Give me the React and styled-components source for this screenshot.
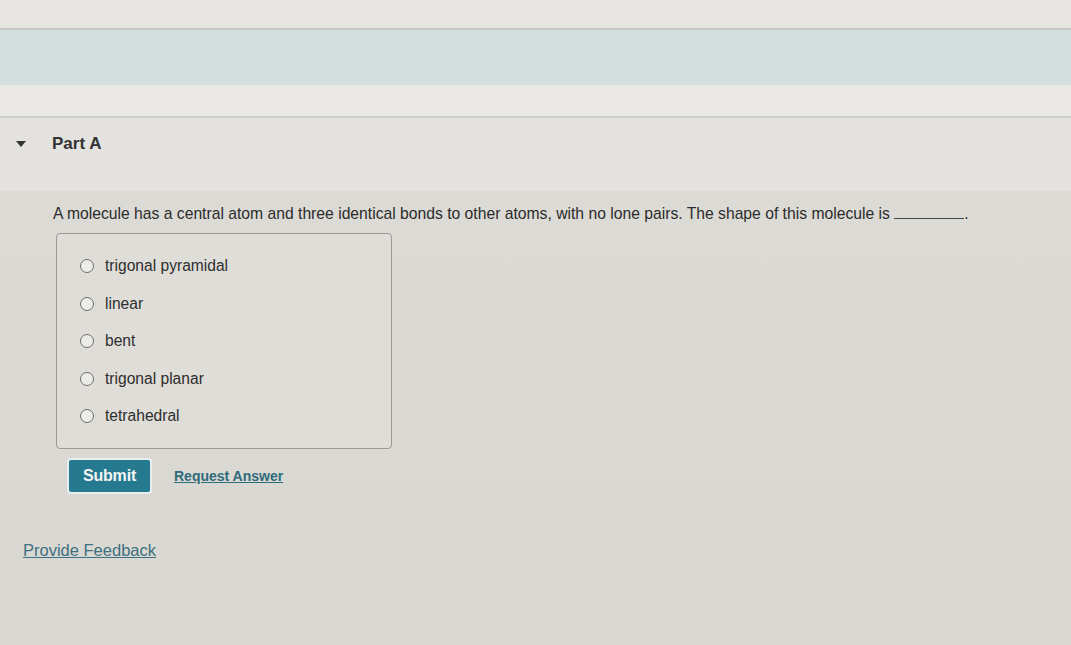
import React from "react";
import styled, { createGlobalStyle } from "styled-components";

const GlobalStyle = createGlobalStyle`
  html, body {
    margin: 0;
    padding: 0;
    background: #dcdad5;
    font-family: "Liberation Sans", Arial, sans-serif;
    color: #2b2b2b;
  }
`;

const options = [
  "trigonal pyramidal",
  "linear",
  "bent",
  "trigonal planar",
  "tetrahedral",
];

const App = () => {
  return (
    <Page>
      <GlobalStyle />
      <TopStrip />
      <Banner />
      <Spacer />
      <PartHeader>
        <Caret />
        <PartTitle>Part A</PartTitle>
      </PartHeader>
      <Content>
        <Question>
          A molecule has a central atom and three identical bonds to other
          atoms, with no lone pairs. The shape of this molecule is <Blank />.
        </Question>
        <OptionBox>
          {options.map((opt) => (
            <Option key={opt}>
              <Radio />
              <span>{opt}</span>
            </Option>
          ))}
        </OptionBox>
        <Actions>
          <SubmitButton>Submit</SubmitButton>
          <TextLink href="#">Request Answer</TextLink>
        </Actions>
      </Content>
      <Feedback href="#">Provide Feedback</Feedback>
    </Page>
  );
};

export default App;

const Page = styled.div`
  width: 1071px;
  height: 645px;
  overflow: hidden;
  background: linear-gradient(180deg, #dedcd7 0%, #d9d7d1 100%);
`;

const TopStrip = styled.div`
  height: 28px;
  background: #e7e5e2;
  border-bottom: 2px solid #c9cac8;
`;

const Banner = styled.div`
  height: 55px;
  background: #d2dfdc;
`;

const Spacer = styled.div`
  height: 31px;
  background: #eae8e5;
  border-bottom: 2px solid #cbcbc9;
`;

const PartHeader = styled.div`
  height: 73px;
  background: #e3e2df;
  display: flex;
  align-items: flex-start;
  padding-top: 16px;
  box-sizing: border-box;
`;

const Caret = styled.span`
  width: 0;
  height: 0;
  margin: 7px 0 0 16px;
  border-left: 5px solid transparent;
  border-right: 5px solid transparent;
  border-top: 6px solid #333;
`;

const PartTitle = styled.h2`
  margin: 0 0 0 26px;
  font-size: 17px;
  font-weight: 700;
  color: #333;
`;

const Content = styled.div`
  padding: 14px 0 0 53px;
`;

const Question = styled.p`
  margin: 0;
  font-size: 15.7px;
  color: #2b2b2b;
`;

const Blank = styled.span`
  display: inline-block;
  width: 70px;
  border-bottom: 1px solid #444;
  vertical-align: baseline;
`;

const OptionBox = styled.div`
  margin: 10px 0 0 3px;
  width: 336px;
  height: 216px;
  box-sizing: border-box;
  border: 1.5px solid #9a9996;
  border-radius: 4px;
  padding: 23px 0 0 23px;
  display: flex;
  flex-direction: column;
  gap: 19.5px;
  background: #dfddd8;
`;

const Option = styled.label`
  display: flex;
  align-items: center;
  gap: 11px;
  font-size: 15.6px;
  color: #2e2e2e;
  height: 18px;
`;

const Radio = styled.span`
  width: 12px;
  height: 12px;
  border-radius: 50%;
  border: 1.5px solid #6d6d6c;
  background: #eeece9;
  flex-shrink: 0;
`;

const Actions = styled.div`
  display: flex;
  align-items: center;
  gap: 24px;
  margin: 11px 0 0 16px;
`;

const SubmitButton = styled.button`
  width: 81px;
  height: 32px;
  border: none;
  border-radius: 2px;
  background: #267a8f;
  color: #f4f4f4;
  font-family: "Liberation Sans", Arial, sans-serif;
  font-weight: 700;
  font-size: 16px;
  letter-spacing: -0.2px;
  box-shadow: 0 0 0 2px #e8eeee;
`;

const TextLink = styled.a`
  color: #2f6b7b;
  font-weight: 700;
  font-size: 14px;
  text-decoration: underline;
`;

const Feedback = styled.a`
  display: inline-block;
  margin: 49px 0 0 23px;
  color: #3d7080;
  font-size: 16.5px;
  text-decoration: underline;
`;
